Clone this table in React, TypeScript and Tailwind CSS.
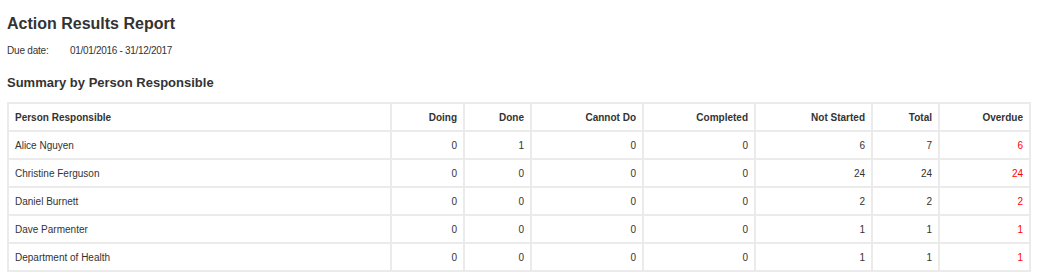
const columns = [
  { label: "Person Responsible", width: "w-[383px]", align: "text-left" },
  { label: "Doing", width: "w-[73px]", align: "text-right" },
  { label: "Done", width: "w-[67px]", align: "text-right" },
  { label: "Cannot Do", width: "w-[112px]", align: "text-right" },
  { label: "Completed", width: "w-[112px]", align: "text-right" },
  { label: "Not Started", width: "w-[117px]", align: "text-right" },
  { label: "Total", width: "w-[67px]", align: "text-right" },
  { label: "Overdue", width: "w-[91px]", align: "text-right" },
];

const rows = [
  { name: "Alice Nguyen", doing: 0, done: 1, cannotDo: 0, completed: 0, notStarted: 6, total: 7, overdue: 6 },
  { name: "Christine Ferguson", doing: 0, done: 0, cannotDo: 0, completed: 0, notStarted: 24, total: 24, overdue: 24 },
  { name: "Daniel Burnett", doing: 0, done: 0, cannotDo: 0, completed: 0, notStarted: 2, total: 2, overdue: 2 },
  { name: "Dave Parmenter", doing: 0, done: 0, cannotDo: 0, completed: 0, notStarted: 1, total: 1, overdue: 1 },
  { name: "Department of Health", doing: 0, done: 0, cannotDo: 0, completed: 0, notStarted: 1, total: 1, overdue: 1 },
];

const cell = "border-2 border-[#ebebeb] h-[28px] px-[6px] pt-[2px] pb-0 align-middle";

export default function App() {
  return (
    <div className="min-h-[274px] bg-white px-[7px] pt-[15px] text-[#333] font-['Liberation_Sans',Arial,sans-serif]">
      <h1 className="text-[16px] leading-[18px] font-bold">Action Results Report</h1>

      {/* Report filter */}
      <div className="mt-[12px] flex text-[10px] leading-[12px]">
        <span className="w-[63px] tracking-[-0.2px]">Due date:</span>
        <span className="tracking-[-0.3px]">01/01/2016 - 31/12/2017</span>
      </div>

      <h2 className="mt-[18px] text-[13px] leading-[16px] font-bold">Summary by Person Responsible</h2>

      <table className="mt-[11px] w-[1024px] table-fixed border-collapse text-[10px] leading-[12px]">
        <colgroup>
          {columns.map((col) => (
            <col key={col.label} className={col.width} />
          ))}
        </colgroup>
        <thead>
          <tr>
            {columns.map((col) => (
              <th key={col.label} className={`${cell} ${col.align} font-bold`}>
                {col.label}
              </th>
            ))}
          </tr>
        </thead>
        <tbody>
          {rows.map((r) => (
            <tr key={r.name}>
              <td className={`${cell} text-left`}>{r.name}</td>
              <td className={`${cell} text-right`}>{r.doing}</td>
              <td className={`${cell} text-right`}>{r.done}</td>
              <td className={`${cell} text-right`}>{r.cannotDo}</td>
              <td className={`${cell} text-right`}>{r.completed}</td>
              <td className={`${cell} text-right`}>{r.notStarted}</td>
              <td className={`${cell} text-right`}>{r.total}</td>
              <td className={`${cell} text-right text-[#ff0000]`}>{r.overdue}</td>
            </tr>
          ))}
        </tbody>
      </table>
    </div>
  );
}
